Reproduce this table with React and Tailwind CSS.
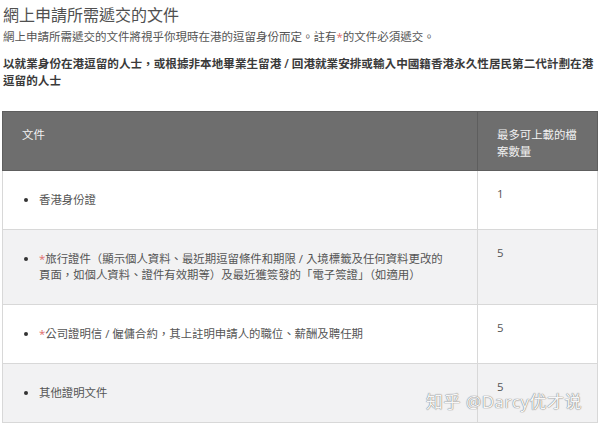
import React from 'react';

const rows = [
  { text: <>香港身份證</>, count: '1', shaded: false },
  {
    text: (
      <>
        <span className="text-[#e06b6b]">*</span>旅行證件（顯示個人資料、最近期逗留條件和期限 / 入境標籤及任何資料更改的
        <br />
        頁面，如個人資料、證件有效期等）及最近獲簽發的「電子簽證」（如適用）
      </>
    ),
    count: '5',
    shaded: true,
  },
  {
    text: (
      <>
        <span className="text-[#e06b6b]">*</span>公司證明信 / 僱傭合約，其上註明申請人的職位、薪酬及聘任期
      </>
    ),
    count: '5',
    shaded: false,
  },
  { text: <>其他證明文件</>, count: '5', shaded: true },
];

const App = () => {
  return (
    <div className="relative w-[600px] h-[428px] overflow-hidden bg-white font-['Open_Sans','Noto_Sans_CJK_TC',sans-serif] text-[#555]">
      <div className="pl-[3px] pt-[4px]">
        <h1 className="text-[16px] leading-[22px] font-normal text-[#505050]">網上申請所需遞交的文件</h1>
        <p className="mt-[2px] text-[11.5px] leading-[17px] text-[#555]">
          網上申請所需遞交的文件將視乎你現時在港的逗留身份而定。註有<span className="text-[#e06b6b]">*</span>的文件必須遞交。
        </p>
        <p className="mt-[10px] w-[592px] text-[11.6px] leading-[17px] font-semibold text-[#3a3a3a]">
          以就業身份在港逗留的人士，或根據非本地畢業生留港 / 回港就業安排或輸入中國籍香港永久性居民第二代計劃在港逗留的人士
        </p>
      </div>

      <table className="mt-[22px] ml-[2px] w-[595px] table-fixed border-collapse text-[11.4px] leading-[16px]">
        <colgroup>
          <col className="w-[475px]" />
          <col className="w-[120px]" />
        </colgroup>
        <thead>
          <tr className="h-[59px] bg-[#6e6e6e] text-[#f2f2f2] align-top">
            <th className="border border-[#5e5e5e] pl-[19px] pt-[14px] text-left font-normal leading-[17px]">文件</th>
            <th className="border border-[#5e5e5e] border-l-[#9a9a9a] pl-[19px] pr-[16px] pt-[14px] text-left font-normal leading-[17px]">
              最多可上載的檔案數量
            </th>
          </tr>
        </thead>
        <tbody>
          {rows.map((row, i) => (
            <tr key={i} className={`${row.shaded ? 'bg-[#f2f2f3]' : 'bg-white'} align-top`}>
              <td className="border border-[#d8d8d8] pl-[19px] py-[15px]">
                <ul className="my-[6px] list-disc pl-[17px] marker:text-[#333]">
                  <li>{row.text}</li>
                </ul>
              </td>
              <td className="border border-[#d8d8d8] pl-[19px] pt-[15px] font-['Open_Sans',sans-serif]">{row.count}</td>
            </tr>
          ))}
        </tbody>
      </table>

      <div className="absolute left-[426px] top-[391px] text-[17px] leading-[22px] tracking-[0.5px] text-[#f7f7f7] [text-shadow:0_0_1px_#7a7a7a,0_0_1px_#7a7a7a]">
        知乎 @Darcy优才说
      </div>
    </div>
  );
};

export default App;
